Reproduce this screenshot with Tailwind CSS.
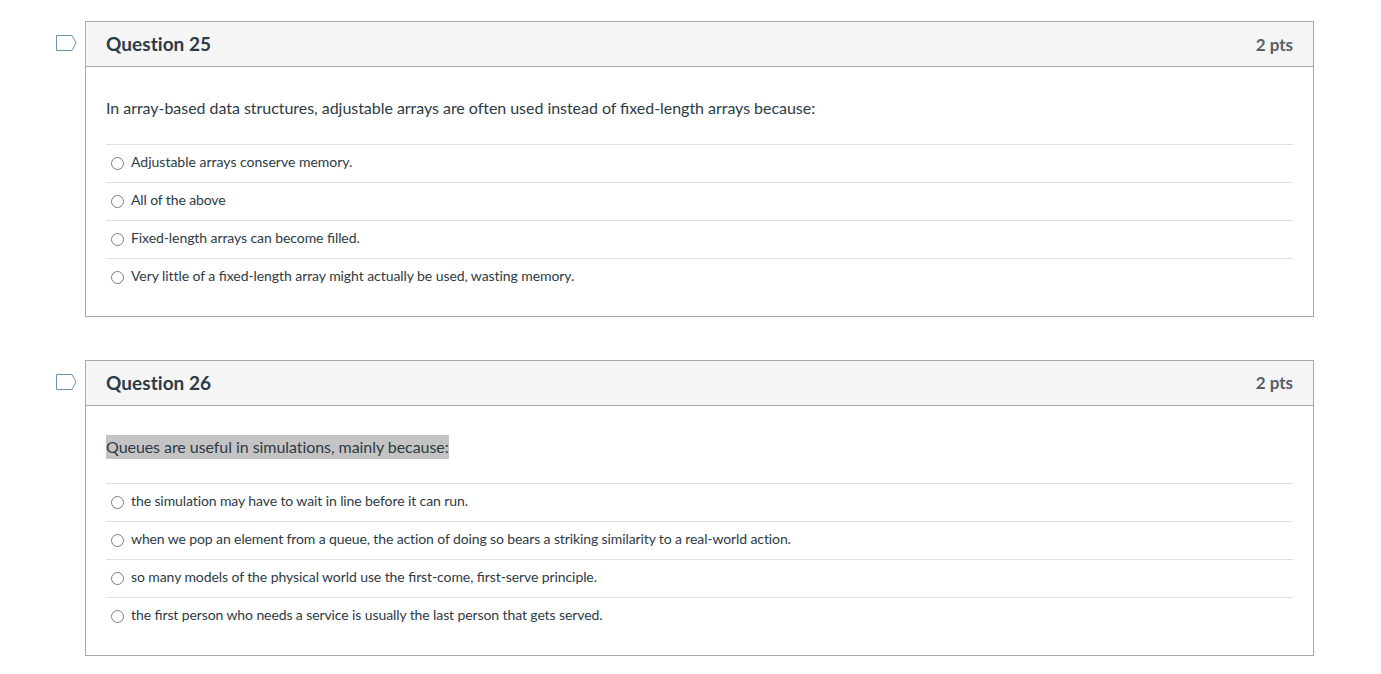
<!DOCTYPE html>
<html lang="en">
<head>
    <meta charset="UTF-8">
    <title>Quiz</title>
    <script src="https://cdn.jsdelivr.net/npm/@tailwindcss/browser@4"></script>
</head>
<body class="bg-white font-['Lato','Open_Sans',sans-serif] text-[#2d3b45]">
    <div class="pt-[21px] pl-[85px] w-[1314px] flex flex-col gap-[43px]">

        <div class="relative border border-[#a9a9a9] h-[296px]">
            <svg class="absolute left-[-30px] top-[12px]" width="22" height="18" viewBox="0 0 22 18" fill="none"><path d="M0.5 1.5H16L20 9L16 16.5H0.5Z" stroke="#6a95b0" stroke-width="1"/></svg>
            <div class="flex justify-between items-center h-[45px] px-5 bg-[#f5f5f5] border-b border-[#a9a9a9]">
                <span class="text-[19px] font-bold tracking-[0.05px]">Question 25</span>
                <span class="text-[17px] font-bold text-[#555f66] pt-px">2 pts</span>
            </div>
            <div class="px-5 pt-[29px]">
                <div class="text-[16px] leading-6 mb-6 tracking-[-0.04px]">In array-based data structures, adjustable arrays are often used instead of <span class="tracking-normal">fi</span>xed-length arrays because:</div>
                <div class="border-t border-[#dfdfdf] h-[38px] flex items-center pl-[5px] pb-1 gap-[7px] text-[14px]">
                    <span class="w-[13px] h-[13px] rounded-full border-[1.5px] border-[#7a7f83] mt-[3px]"></span>
                    <span>Adjustable arrays conserve memory.</span>
                </div>
                <div class="border-t border-[#dfdfdf] h-[38px] flex items-center pl-[5px] pb-1 gap-[7px] text-[14px]">
                    <span class="w-[13px] h-[13px] rounded-full border-[1.5px] border-[#7a7f83] mt-[3px]"></span>
                    <span class="tracking-[-0.12px]">All of the above</span>
                </div>
                <div class="border-t border-[#dfdfdf] h-[38px] flex items-center pl-[5px] pb-1 gap-[7px] text-[14px]">
                    <span class="w-[13px] h-[13px] rounded-full border-[1.5px] border-[#7a7f83] mt-[3px]"></span>
                    <span class="tracking-[-0.08px]">Fixed-length arrays can become <span class="tracking-normal">fi</span>lled.</span>
                </div>
                <div class="border-t border-[#dfdfdf] h-[38px] flex items-center pl-[5px] pb-1 gap-[7px] text-[14px]">
                    <span class="w-[13px] h-[13px] rounded-full border-[1.5px] border-[#7a7f83] mt-[3px]"></span>
                    <span class="tracking-[-0.07px]">Very little of a <span class="tracking-normal">fi</span>xed-length array might actually be used, wasting memory.</span>
                </div>
            </div>
        </div>

        <div class="relative border border-[#a9a9a9] h-[296px]">
            <svg class="absolute left-[-30px] top-[12px]" width="22" height="18" viewBox="0 0 22 18" fill="none"><path d="M0.5 1.5H16L20 9L16 16.5H0.5Z" stroke="#6a95b0" stroke-width="1"/></svg>
            <div class="flex justify-between items-center h-[45px] px-5 bg-[#f5f5f5] border-b border-[#a9a9a9]">
                <span class="text-[19px] font-bold tracking-[0.05px]">Question 26</span>
                <span class="text-[17px] font-bold text-[#555f66]">2 pts</span>
            </div>
            <div class="px-5 pt-[29px]">
                <div class="text-[16px] leading-6 mb-6 tracking-[-0.06px]"><span class="bg-[#c4c4c4] inline-block">Queues are useful in simulations, mainly because:</span></div>
                <div class="border-t border-[#dfdfdf] h-[38px] flex items-center pl-[5px] pb-1 gap-[7px] text-[14px]">
                    <span class="w-[13px] h-[13px] rounded-full border-[1.5px] border-[#7a7f83] mt-[3px]"></span>
                    <span class="tracking-[-0.1px]">the simulation may have to wait in line before it can run.</span>
                </div>
                <div class="border-t border-[#dfdfdf] h-[38px] flex items-center pl-[5px] pb-1 gap-[7px] text-[14px]">
                    <span class="w-[13px] h-[13px] rounded-full border-[1.5px] border-[#7a7f83] mt-[3px]"></span>
                    <span class="tracking-[-0.11px]">when we pop an element from a queue, the action of doing so bears a striking similarity to a real-world action.</span>
                </div>
                <div class="border-t border-[#dfdfdf] h-[38px] flex items-center pl-[5px] pb-1 gap-[7px] text-[14px]">
                    <span class="w-[13px] h-[13px] rounded-full border-[1.5px] border-[#7a7f83] mt-[3px]"></span>
                    <span class="tracking-[-0.09px]">so many models of the physical world use the <span class="tracking-normal">fi</span>rst-come, <span class="tracking-normal">fi</span>rst-serve principle.</span>
                </div>
                <div class="border-t border-[#dfdfdf] h-[38px] flex items-center pl-[5px] pb-1 gap-[7px] text-[14px]">
                    <span class="w-[13px] h-[13px] rounded-full border-[1.5px] border-[#7a7f83] mt-[3px]"></span>
                    <span class="tracking-[-0.1px]">the <span class="tracking-normal">fi</span>rst person who needs a service is usually the last person that gets served.</span>
                </div>
            </div>
        </div>

    </div>
</body>
</html>
